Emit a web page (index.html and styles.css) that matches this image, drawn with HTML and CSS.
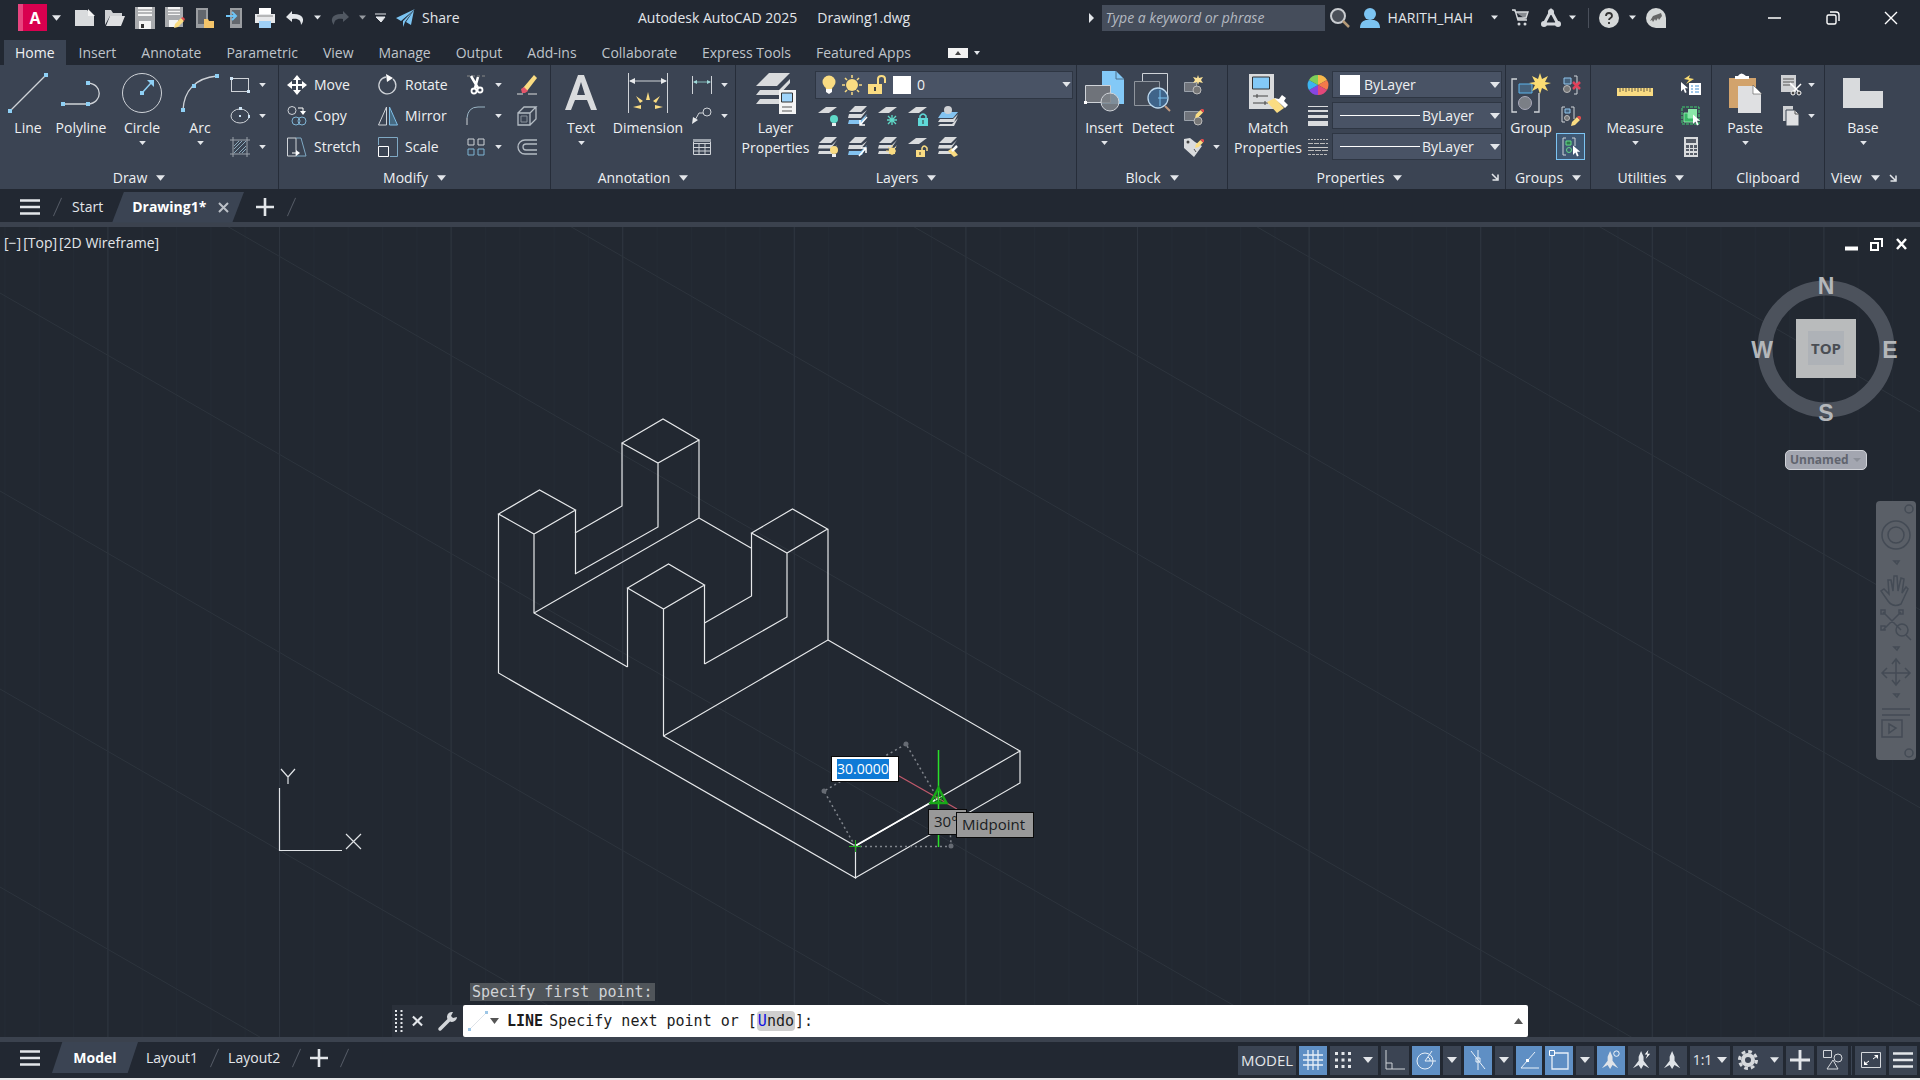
FILE: index.html
```html
<!DOCTYPE html>
<html lang="en">
<head>
<meta charset="utf-8">
<title>Autodesk AutoCAD 2025 - Drawing1.dwg</title>
<link rel="stylesheet" href="styles.css">
</head>
<body>
<svg class="sprite" aria-hidden="true">
  <symbol id="caret" viewBox="0 0 10 6"><path d="M0 0h10L5 6z" fill="#e3e6ea"/></symbol>
  <symbol id="menu" viewBox="0 0 20 16"><path d="M0 1.500h20M0 8h20M0 14.500h20" stroke="#e3e6ea" stroke-width="2.600"/></symbol>
  <symbol id="plus" viewBox="0 0 18 18"><path d="M9 0v18M0 9h18" stroke="#e3e6ea" stroke-width="2.600"/></symbol>
  <symbol id="corner" viewBox="0 0 8 8"><path d="M1 1l5 5M7 1.500V7H1.500" stroke="#e3e6ea" stroke-width="1.500" fill="none"/></symbol>
  <symbol id="sheet1" viewBox="0 0 20 20"><path d="M8 1h11l-8 6H0z" fill="#d9dbdd"/></symbol>
  <symbol id="stack" viewBox="0 0 20 20"><path d="M7 0h12l-6 6H1zM1 8h13l5-5-6 8.500H0zM1 14h12l6-6-5 9H0z" fill="#d9dbdd"/></symbol>
  <symbol id="stackblue" viewBox="0 0 20 20"><path d="M7 0h12l-6 6H1zM1 8h13l5-4-6 8H0z" fill="#d9dbdd"/><path d="M1 14h12l6-6-5 10H0z" fill="#83c3f0"/></symbol>
  <symbol id="pencil" viewBox="0 0 10 10"><path d="M0 10l1-4 5-5 3 3-5 5z" fill="#fadc82"/><path d="M6 1l1-1h2l1 1v2L9 4z" fill="#e04b4b"/></symbol>
  <symbol id="cursor" viewBox="0 0 10 14"><path d="M0 0v12l3-3 2 5 2-1-2-5h4z" fill="#fff"/></symbol>
  <symbol id="man" viewBox="0 0 20 22"><path d="M10 0l3 7v5l7 9-7-4-3 5-3-5-7 4 7-9V7z" fill="#dfe3e8"/></symbol>
</svg>

<div class="app">
<header class="titlebar">
  <div class="quick">
    <button class="logo" aria-label="Application menu">A</button>
    <button class="qcaret" aria-label="More"><svg width="9" height="6"><use href="#caret"/></svg></button>
    <button aria-label="New"><svg width="20" height="20" viewBox="0 0 20 20"><path d="M0 2h12l7 6v10H0z" fill="#d9dbdd"/><path d="M13 1v7h7z" fill="#f4f4f4"/></svg></button>
    <button aria-label="Open"><svg width="20" height="20" viewBox="0 0 20 20"><path d="M0 17V2h6l2 3h9v3H5z" fill="#cfd1d4"/><path d="M5 8h15l-4 10H1z" fill="#dfe0e2"/></svg></button>
    <button aria-label="Save"><svg width="20" height="22" viewBox="0 0 20 22"><path d="M0 0h20v22H0z" fill="#a9abae"/><path d="M3 0h14v9H3zM4 14h12v8H4z" fill="#f4f4f4"/><path d="M3 3h14M3 6h14" stroke="#77797c"/><path d="M6 17h3v4H6z" fill="#333"/></svg></button>
    <button aria-label="Save as"><svg width="20" height="22" viewBox="0 0 20 22"><path d="M0 0h18v20H0z" fill="#a9abae"/><path d="M3 0h12v8H3zM4 13h9v7H4z" fill="#f4f4f4"/><path d="M3 3h12M3 6h12" stroke="#77797c"/><g transform="translate(9 10)"><path d="M0 11l1-4 6-6 3 3-6 6z" fill="#fadc82"/><path d="M7 1l2-1 2 2-1 2z" fill="#e04b4b"/></g></svg></button>
    <button aria-label="Open from mobile"><svg width="20" height="20" viewBox="0 0 20 20"><path d="M1 0h12v20H1z" fill="#9a9da1"/><path d="M3 2h8v14H3z" fill="#63676d"/><path d="M9 11h4l1 2h5v7H9z" fill="#f5c56a"/></svg></button>
    <button aria-label="Save to mobile"><svg width="20" height="20" viewBox="0 0 20 20"><path d="M5 0h12v20H5z" fill="#9a9da1"/><path d="M7 2h8v14H7z" fill="#63676d"/><path d="M1 8h9M7 4l4 4-4 4" stroke="#6fc4f5" stroke-width="2" fill="none"/></svg></button>
    <button aria-label="Plot"><svg width="20" height="20" viewBox="0 0 20 20"><path d="M4 0h12v6H4z" fill="#fff"/><path d="M0 6h20v9H0z" fill="#e6e7e9"/><path d="M2 8h16" stroke="#888"/><path d="M4 13h12v7H4z" fill="#9fd0f7"/></svg></button>
    <button aria-label="Undo"><svg width="20" height="16" viewBox="0 0 20 16"><path d="M7 1L1 7l6 5V9c6-1 9 1 9 6 5-6 1-12-9-11z" fill="#e3e6ea"/></svg></button>
    <button class="qc2" aria-label="Undo list"><svg width="7" height="5"><use href="#caret"/></svg></button>
    <button aria-label="Redo"><svg width="20" height="16" viewBox="0 0 20 16"><path d="M13 1l6 6-6 5V9C7 8 4 10 4 15-1 9 3 3 13 4z" fill="#515862"/></svg></button>
    <button class="qc2 dim" aria-label="Redo list"><svg width="7" height="5"><use href="#caret"/></svg></button>
    <button aria-label="Customize"><svg width="11" height="10" viewBox="0 0 11 10"><path d="M0 1h11M1 4h9l-4 5z" fill="#e3e6ea" stroke="#e3e6ea"/></svg></button>
    <button class="share"><svg width="19" height="18" viewBox="0 0 19 18"><path d="M19 0L0 9l5 3zM18 1l-3 15-5-3zM7 12l10-10-8 11-2 5z" fill="#7cc4f2"/></svg>Share</button>
  </div>
  <h1 class="title"><span>Autodesk AutoCAD 2025</span><span>Drawing1.dwg</span></h1>
  <div class="account">
    <svg width="5" height="10" viewBox="0 0 5 10"><path d="M0 0l5 5-5 5z" fill="#e3e6ea"/></svg>
    <input class="search" type="text" placeholder="Type a keyword or phrase" aria-label="Search">
    <button aria-label="Search"><svg width="20" height="20" viewBox="0 0 20 20"><circle cx="8" cy="8" r="7" fill="#4a4f58" stroke="#c9ccd0" stroke-width="2"/><path d="M13 13l6 6" stroke="#b59a78" stroke-width="2.500"/></svg></button>
    <button class="user"><svg width="20" height="20" viewBox="0 0 20 20"><circle cx="10" cy="6" r="6" fill="#7cc4f2"/><path d="M0 20c0-6 4-8 7-8h6c3 0 7 2 7 8z" fill="#7cc4f2"/></svg>HARITH_HAH</button>
    <button class="gap wide" aria-label="Account menu"><svg width="7" height="5"><use href="#caret"/></svg></button>
    <button class="gap" aria-label="App store"><svg width="17" height="17" viewBox="0 0 17 17"><path d="M0 1h3l3 10h9M4 3h12l-2 6H5" fill="#888c92" stroke="#d5d8dc" stroke-width="1.400"/><circle cx="7" cy="15" r="1.500" fill="#d5d8dc"/><circle cx="13" cy="15" r="1.500" fill="#d5d8dc"/></svg></button>
    <button class="gaps" aria-label="Autodesk app"><svg width="20" height="18" viewBox="0 0 20 18"><path d="M10 2L3 15h14z" fill="none" stroke="#d5d8dc" stroke-width="3"/><circle cx="10" cy="3" r="3" fill="#d5d8dc"/><circle cx="3" cy="15" r="3" fill="#d5d8dc"/><circle cx="17" cy="15" r="3" fill="#d5d8dc"/></svg></button>
    <button aria-label="Autodesk app menu"><svg width="7" height="5"><use href="#caret"/></svg></button>
    <i class="vline"></i>
    <button aria-label="Help"><svg width="20" height="20" viewBox="0 0 20 20"><circle cx="10" cy="10" r="10" fill="#d5d8d8"/><path d="M7 8c0-4 6-4 6 0 0 2-3 2-3 4M10 14v2" fill="none" stroke="#333" stroke-width="1.800"/></svg></button>
    <button aria-label="Help menu"><svg width="7" height="5"><use href="#caret"/></svg></button>
    <button aria-label="Assistant"><svg width="20" height="20" viewBox="0 0 20 20"><path d="M10 0a10 10 0 0 1 10 10v10H10A10 10 0 0 1 10 0z" fill="#d5d8d8"/><path d="M4 13l3-5 8-3 1 3-3 4-1-2-2 3-1-2-2 3-1-2z" fill="#666"/></svg></button>
  </div>
  <div class="window">
    <button aria-label="Minimize"><svg width="14" height="14" viewBox="0 0 14 14"><path d="M0 7h13" stroke="#fff" stroke-width="1.500"/></svg></button>
    <button aria-label="Restore"><svg width="14" height="14" viewBox="0 0 14 14"><rect x="1" y="4" width="9" height="9" rx="1.500" fill="none" stroke="#fff" stroke-width="1.400"/><path d="M4 1h6q3 0 3 3v6" fill="none" stroke="#fff" stroke-width="1.400"/></svg></button>
    <button aria-label="Close"><svg width="14" height="14" viewBox="0 0 14 14"><path d="M1 1l12 12M13 1L1 13" stroke="#fff" stroke-width="1.400"/></svg></button>
  </div>
</header>

<nav class="tabs">
  <a class="on" href="#home">Home</a><a href="#insert">Insert</a><a href="#annotate">Annotate</a><a href="#parametric">Parametric</a><a href="#view">View</a><a href="#manage">Manage</a><a href="#output">Output</a><a href="#addins">Add-ins</a><a href="#collaborate">Collaborate</a><a href="#express">Express Tools</a><a href="#featured">Featured Apps</a>
  <button aria-label="Minimize ribbon"><svg width="32" height="10" viewBox="0 0 32 10"><path d="M0 0h20v10H0z" fill="#f2f2f2"/><path d="M7 7h6l-3-4z" fill="#444"/><path d="M26 3h6l-3 4z" fill="#e3e6ea"/></svg></button>
</nav>

<main class="ribbon">
  <section class="panel">
    <div class="body draw">
      <button class="big"><svg width="40" height="40" viewBox="0 0 40 40"><path d="M2 38L38 2" stroke="#cfd3d8" stroke-width="1.300"/><path d="M0 36h4v4H0zM36 0h4v4h-4z" fill="#8fd0f5"/></svg>Line</button>
      <button class="big"><svg width="40" height="40" viewBox="0 0 40 40"><path d="M2 31h25c15-1 15-20 0-21" stroke="#cfd3d8" stroke-width="1.300" fill="none"/><path d="M0 29h4v4H0zM25 29h4v4h-4zM25 8h4v4h-4z" fill="#8fd0f5"/></svg>Polyline</button>
      <button class="big"><svg width="40" height="40" viewBox="0 0 40 40"><circle cx="20" cy="20" r="19.500" stroke="#cfd3d8" fill="none"/><path d="M20 20L29 10" stroke="#8fd0f5" stroke-width="1.500"/><path d="M18 18h4v4h-4zM25 7h7v7z" fill="#8fd0f5"/></svg>Circle<svg class="c" width="7" height="4"><use href="#caret"/></svg></button>
      <button class="big"><svg width="40" height="40" viewBox="0 0 40 40"><path d="M3 37C4 18 15 5 37 3" stroke="#cfd3d8" fill="none" stroke-width="1.300"/><path d="M1 35h4v4H1zM12 11h4v4h-4zM35 1h4v4h-4z" fill="#8fd0f5"/></svg>Arc<svg class="c" width="7" height="4"><use href="#caret"/></svg></button>
      <div class="stack">
        <button class="tool" aria-label="Rectangle"><svg width="20" height="20" viewBox="0 0 20 20"><rect x="1.500" y="3.500" width="17" height="13" fill="none" stroke="#cfd3d8"/><path d="M0 2h3v3H0zM17 15h3v3h-3z" fill="#cfe4f5"/></svg><svg width="7" height="4"><use href="#caret"/></svg></button>
        <button class="tool" aria-label="Ellipse"><svg width="20" height="20" viewBox="0 0 20 20"><ellipse cx="10" cy="10" rx="9" ry="7" fill="none" stroke="#cfd3d8"/><path d="M9 9h2v2H9zM9 1h3v3H9zM18 9h2v3h-2z" fill="#cfe4f5"/></svg><svg width="7" height="4"><use href="#caret"/></svg></button>
        <button class="tool" aria-label="Hatch"><svg width="20" height="20" viewBox="0 0 20 20"><path d="M3 0v20M17 0v20M0 3h20M0 17h20" stroke="#9ba2ab" fill="none"/><path d="M4 9l5-5M4 16L16 4M9 16l7-7M4 12l8-8M12 16l4-4" stroke="#8ba9ba"/></svg><svg width="7" height="4"><use href="#caret"/></svg></button>
      </div>
    </div>
    <h2>Draw<svg width="9" height="6"><use href="#caret"/></svg></h2>
  </section>

  <section class="panel">
    <div class="body modify">
      <div class="stack">
        <button class="tool"><svg width="20" height="20" viewBox="0 0 20 20"><path d="M10 3v14M3 10h14" stroke="#fff" stroke-width="2"/><path d="M10 0l4 5H6zM10 20l4-5H6zM0 10l5-4v8zM20 10l-5-4v8z" fill="#fff"/></svg>Move</button>
        <button class="tool"><svg width="20" height="20" viewBox="0 0 20 20" fill="none"><circle cx="5" cy="4.500" r="4" stroke="#cfd3d8"/><path d="M11 2h5v4" stroke="#fff"/><path d="M13 5h6l-3 4z" fill="#fff"/><circle cx="9" cy="15" r="4" stroke="#7fb4d4"/><circle cx="15" cy="15" r="4" stroke="#7fb4d4"/></svg>Copy</button>
        <button class="tool"><svg width="20" height="20" viewBox="0 0 20 20" fill="none"><path d="M9 1H.5v18H9z" stroke="#cfd3d8"/><path d="M9 1h5l5 18H9" stroke="#7fa9c4"/><path d="M5 16h5" stroke="#fff"/><path d="M9 13l4 3-4 3z" fill="#fff"/></svg>Stretch</button>
      </div>
      <div class="stack">
        <button class="tool"><svg width="20" height="20" viewBox="0 0 20 20" fill="none"><path d="M15 4a8.500 8.500 0 1 1-7-2" stroke="#cfd3d8" stroke-width="1.300"/><path d="M8-1l7 4-6 4z" fill="#fff"/></svg>Rotate</button>
        <button class="tool"><svg width="20" height="20" viewBox="0 0 20 20" fill="none"><path d="M8.500 1v18H.5z" stroke="#cfd3d8"/><path d="M11.500 1v18h8z" stroke="#7fbfe8" fill="#466a82"/></svg>Mirror</button>
        <button class="tool"><svg width="20" height="20" viewBox="0 0 20 20" fill="none"><path d="M.5 8V.5h19v19H12" stroke="#7fa9c4"/><path d="M.5 9.500h10v10H.5z" stroke="#fff"/></svg>Scale</button>
      </div>
      <div class="stack">
        <button class="tool" aria-label="Trim"><svg width="20" height="20" viewBox="0 0 20 20" fill="none"><path d="M1 1h18" stroke="#888" stroke-dasharray="3 2"/><path d="M5 1l7 12M12 2L9 13" stroke="#fff" stroke-width="2.500"/><circle cx="8" cy="16" r="2.500" stroke="#fff" stroke-width="1.800"/><circle cx="14" cy="15" r="2.500" stroke="#fff" stroke-width="1.800"/></svg><svg width="7" height="4"><use href="#caret"/></svg></button>
        <button class="tool" aria-label="Fillet"><svg width="20" height="20" viewBox="0 0 20 20" fill="none"><path d="M1 19V12" stroke="#cfd3d8"/><path d="M1 12Q2 1 12 1h7" stroke="#9ab4c4"/></svg><svg width="7" height="4"><use href="#caret"/></svg></button>
        <button class="tool" aria-label="Array"><svg width="20" height="20" viewBox="0 0 20 20" fill="none"><path d="M2 2h6v6H2zM12 2h6v6h-6z" stroke="#cfd3d8"/><path d="M2 12h6v6H2zM12 12h6v6h-6z" stroke="#7fb4d4"/></svg><svg width="7" height="4"><use href="#caret"/></svg></button>
      </div>
      <div class="stack">
        <button class="tool" aria-label="Erase"><svg width="20" height="20" viewBox="0 0 20 20" fill="none"><path d="M0 19h6M11 19h9" stroke="#ddd"/><path d="M6 13L17 0l3 3-10 13z" fill="#fadc82"/><path d="M4 14l3-2 4 4-3 2H5z" fill="#e4566a"/></svg></button>
        <button class="tool" aria-label="Explode"><svg width="20" height="20" viewBox="0 0 20 20" fill="none"><path d="M1 7h12v12H1zM1 7l6-6h12l-6 6M19 1v12l-6 6" stroke="#b4bcc4" stroke-width="1.300"/><path d="M4 10h6v6H4z" stroke="#8a929c"/></svg></button>
        <button class="tool" aria-label="Offset"><svg width="20" height="20" viewBox="0 0 20 20" fill="none"><path d="M20 3H8a7 7 0 0 0 0 14h12M20 7H9a3 3 0 0 0 0 6h11" stroke="#b4bcc4" stroke-width="1.300"/></svg></button>
      </div>
    </div>
    <h2>Modify<svg width="9" height="6"><use href="#caret"/></svg></h2>
  </section>

  <section class="panel">
    <div class="body annot">
      <button class="big"><svg width="32" height="40" viewBox="0 0 32 40"><path d="M0 37L13 2h6l13 35h-6l-4-10H10L6 37zM12 22h8L16 9z" fill="#d9dbdd" fill-rule="evenodd"/></svg>Text<svg class="c" width="7" height="4"><use href="#caret"/></svg></button>
      <button class="big"><svg width="40" height="40" viewBox="0 0 40 40"><path d="M.5 0v40M39.500 0v40M2 8h36" stroke="#cfd3d8"/><path d="M1 8l6-3v6zM39 8l-6-3v6z" fill="#e8eaec"/><path d="M20 19l2 8h-4zM8 23l7 5-3 2zM32 23l-4 7-3-2zM5 34l8-2v4zM35 34l-8-2v4z" fill="#fadc82"/></svg>Dimension</button>
      <div class="stack">
        <button class="tool" aria-label="Linear"><svg width="20" height="20" viewBox="0 0 20 20"><path d="M.5 1v18M19.500 1v18" stroke="#cfd3d8"/><path d="M2 7h16" stroke="#83b9b9"/><path d="M1 7l4-2v4zM19 7l-4-2v4z" fill="#9fd8d8"/></svg><svg width="7" height="4"><use href="#caret"/></svg></button>
        <button class="tool" aria-label="Leader"><svg width="20" height="20" viewBox="0 0 20 20"><circle cx="15" cy="6" r="4" fill="none" stroke="#cfd3d8"/><path d="M11 7H7l-5 9" stroke="#cfd3d8" fill="none"/><path d="M0 18l1-7 5 3z" fill="#e8eaec"/></svg><svg width="7" height="4"><use href="#caret"/></svg></button>
        <button class="tool" aria-label="Table"><svg width="20" height="20" viewBox="0 0 20 20"><path d="M1.500 2.500h17v15h-17zM1 6.500h18M1 10.500h18M1 14h18M7 6v12M13 6v12" stroke="#cfd3d8" fill="none"/><path d="M1 2h18v3H1z" fill="#9ba2ab"/></svg></button>
      </div>
    </div>
    <h2>Annotation<svg width="9" height="6"><use href="#caret"/></svg></h2>
  </section>

  <section class="panel">
    <div class="body layers">
      <button class="big"><svg width="40" height="40" viewBox="0 0 40 40"><path d="M13 0h21L21 13H0z" fill="#d9dbdd"/><path d="M4 17h19L34 6v4L23 22H0zM4 26h19l8-9v5l-8 9H0z" fill="#d9dbdd"/><path d="M23 17h17v24H23z" fill="#f4f4f4"/><path d="M25.500 20h11v9h-11z" fill="#9fd4fa" stroke="#333" stroke-width="1"/><path d="M26 34h10M26 38h10" stroke="#555"/></svg>Layer<br>Properties</button>
      <div class="layercol">
        <button class="combo">
          <svg width="14" height="19" viewBox="0 0 14 19"><circle cx="7" cy="7" r="6.500" fill="#fadc82"/><path d="M3 11h8l-1 3H4z" fill="#fadc82"/><path d="M4 14h6v3l-3 2-3-2z" fill="#fff"/></svg>
          <svg width="20" height="20" viewBox="0 0 20 20"><circle cx="10" cy="10" r="6" fill="#fadc82"/><path d="M10 0v3M10 17v3M0 10h3M17 10h3M3 3l2 2M15 15l2 2M3 17l2-2M15 5l2-2" stroke="#fadc82" stroke-width="1.500"/></svg>
          <svg width="19" height="20" viewBox="0 0 19 20"><path d="M0 9h14v10H0z" fill="#fadc82"/><path d="M10 9V4q0-3 3.500-3T17 4v4" fill="none" stroke="#fadc82" stroke-width="2"/><path d="M7 12v4" stroke="#444" stroke-width="2"/></svg>
          <i class="swatch"></i><span>0</span><svg class="end" width="9" height="5"><use href="#caret"/></svg>
        </button>
        <div class="row">
          <button aria-label="Layer off"><svg width="20" height="20" viewBox="0 0 20 20"><use href="#sheet1"/><circle cx="16" cy="13" r="4" fill="#5fd9c8"/><path d="M14 17h4v3h-4z" fill="#eee"/></svg></button>
          <button aria-label="Isolate"><svg width="20" height="20" viewBox="0 0 20 20"><use href="#stackblue"/><path d="M19 11l-7 8M12 14v5h5" stroke="#fff" fill="none" stroke-width="1.500"/></svg></button>
          <button aria-label="Freeze"><svg width="20" height="20" viewBox="0 0 20 20"><use href="#sheet1"/><path d="M14 9v10M9 14h10M10 10l8 8M18 10l-8 8" stroke="#5fd9c8" stroke-width="1.300"/></svg></button>
          <button aria-label="Lock"><svg width="20" height="20" viewBox="0 0 20 20"><use href="#sheet1"/><path d="M10 12h10v8H10z" fill="#5fd9d8"/><path d="M12 12v-2q3-4 6 0v2" stroke="#5fd9d8" fill="none" stroke-width="1.500"/><path d="M15 14v4" stroke="#333"/></svg></button>
          <button aria-label="Make current"><svg width="20" height="20" viewBox="0 0 20 20"><path d="M4 6h16l-5 6H0z" fill="#83c3f0"/><path d="M2 13h13l5-5-4 8H0zM2 18h12l6-6-4 8H0z" fill="#d9dbdd"/><circle cx="10" cy="4" r="4" fill="#cfd1d4"/></svg></button>
        </div>
        <div class="row">
          <button aria-label="Turn all on"><svg width="20" height="20" viewBox="0 0 20 20"><use href="#stack"/><circle cx="16" cy="13" r="4" fill="#fadc82"/><path d="M14 17h4v3h-4z" fill="#eee"/></svg></button>
          <button aria-label="Unisolate"><svg width="20" height="20" viewBox="0 0 20 20"><use href="#stackblue"/><path d="M11 19l7-8M13 11h5v5" stroke="#fff" fill="none" stroke-width="1.500"/></svg></button>
          <button aria-label="Thaw all"><svg width="20" height="20" viewBox="0 0 20 20"><use href="#stack"/><circle cx="14" cy="14" r="3.500" fill="#fadc82"/><path d="M14 8v12M8 14h12M10 10l8 8M18 10l-8 8" stroke="#fadc82" stroke-dasharray="2 2"/></svg></button>
          <button aria-label="Unlock"><svg width="20" height="20" viewBox="0 0 20 20"><use href="#sheet1"/><path d="M8 13h9v7H8z" fill="#fadc82"/><path d="M14 13v-2q2-4 5 0v3" stroke="#fadc82" fill="none" stroke-width="1.500"/><path d="M12 15v3" stroke="#333"/></svg></button>
          <button aria-label="Match layer"><svg width="20" height="20" viewBox="0 0 20 20"><use href="#stack"/><path d="M10 14l4-3 6 7-4 2z" fill="#fadc82"/><path d="M14 14l5-5" stroke="#fff" stroke-width="2.500"/></svg></button>
        </div>
      </div>
    </div>
    <h2>Layers<svg width="9" height="6"><use href="#caret"/></svg></h2>
  </section>

  <section class="panel">
    <div class="body block">
      <button class="big"><svg width="40" height="40" viewBox="0 0 40 40"><path d="M18-2h14l8 8v25H18z" fill="#83c9f7"/><path d="M32-2v8h8" fill="none" stroke="#4d6f8a"/><path d="M1.500 12.500h25v17h-25z" fill="#6f737a" stroke="#cfd3d8"/><circle cx="26" cy="29" r="9" fill="#7e8288" fill-opacity=".85" stroke="#cfd3d8"/><path d="M0 28h3v3H0z" fill="#fff"/></svg>Insert<svg class="c" width="7" height="4"><use href="#caret"/></svg></button>
      <button class="big"><svg width="38" height="40" viewBox="0 0 38 40" fill="none"><path d="M8.500 8V.5h25V25" stroke="#cfd3d8"/><path d="M.5 8.500h25v24H.5z" stroke="#8f959d" fill="#434a56"/><circle cx="24" cy="25" r="10" fill="#3f648a" stroke="#bcd8ee" stroke-width="1.300"/><path d="M24 25h9M26 17v16" stroke="#7cc4f2"/><path d="M31 33l5 5" stroke="#c09a80" stroke-width="2"/></svg>Detect</button>
      <div class="stack">
        <button class="tool" aria-label="Create block"><svg width="20" height="20" viewBox="0 0 20 20"><path d="M.5 7.500h12v9H.5z" fill="#6f737a" stroke="#9ba2ab"/><circle cx="13" cy="15" r="4" fill="#777" stroke="#bbb"/><path d="M14 0l1 3 4-1-2 3 2 3-4-1-1 3-1-3-4 1 2-3-2-3 4 1z" fill="#fbe298"/></svg></button>
        <button class="tool" aria-label="Edit block"><svg width="20" height="20" viewBox="0 0 20 20"><path d="M.5 5.500h14v9H.5z" fill="#6f737a" stroke="#9ba2ab"/><circle cx="14" cy="15" r="4" fill="#777" stroke="#bbb"/><use href="#pencil" x="11" y="1" width="9" height="13"/></svg></button>
        <button class="tool" aria-label="Edit attributes"><svg width="20" height="20" viewBox="0 0 20 20"><path d="M0 2l6-1 5 4 7 4-8 11L0 11z" fill="#d9dbdd"/><circle cx="4" cy="5" r="1.500" fill="#444"/><path d="M10 12l2 3" stroke="#555"/><use href="#pencil" x="11" y="0" width="9" height="13"/></svg><svg width="7" height="4"><use href="#caret"/></svg></button>
      </div>
    </div>
    <h2>Block<svg width="9" height="6"><use href="#caret"/></svg></h2>
  </section>

  <section class="panel">
    <div class="body props">
      <button class="big"><svg width="40" height="40" viewBox="0 0 40 40"><path d="M1 1h25v35H1z" fill="#d9dbdd"/><path d="M4.500 4h17v12h-17z" fill="#83c9f7" stroke="#333"/><path d="M5 23h15M5 30h15M9 21v4M17 28v4" stroke="#444"/><path d="M19 29l8-4 9 10-7 5z" fill="#fadc82"/><path d="M26 25l5 1 3-4 4 3-2 3 4 4-3 3z" fill="#fff"/></svg>Match<br>Properties</button>
      <div class="propcol">
        <svg width="20" height="20" viewBox="0 0 20 20"><path d="M10 10V0a10 10 0 0 1 9 5z" fill="#f7b84b"/><path d="M10 10l9-5a10 10 0 0 1 0 10z" fill="#f47a4a"/><path d="M10 10l9 5a10 10 0 0 1-9 5z" fill="#e3487a"/><path d="M10 10v10a10 10 0 0 1-9-5z" fill="#8746e0"/><path d="M10 10l-9 5A10 10 0 0 1 1 5z" fill="#3cb4f0"/><path d="M10 10L1 5a10 10 0 0 1 9-5z" fill="#7dcf5a"/></svg>
        <button class="combo"><i class="swatch wide"></i><span>ByLayer</span><svg class="end" width="10" height="6"><use href="#caret"/></svg></button>
        <svg width="20" height="20" viewBox="0 0 20 20"><path d="M0 .5h20" stroke="#d9dbdd"/><path d="M0 5h20" stroke="#d9dbdd" stroke-width="2"/><path d="M0 10.500h20" stroke="#d9dbdd" stroke-width="3"/><path d="M0 17.500h20" stroke="#d9dbdd" stroke-width="5"/></svg>
        <button class="combo"><i class="rule"></i><span>ByLayer</span><svg class="end" width="10" height="6"><use href="#caret"/></svg></button>
        <svg width="20" height="20" viewBox="0 0 20 20"><path d="M0 2.500h20" stroke="#bbb" stroke-dasharray="2 1"/><path d="M0 6.500h20" stroke="#bbb" stroke-dasharray="5 1"/><path d="M0 10.500h20" stroke="#ccc"/><path d="M0 13.500h20" stroke="#bbb" stroke-dasharray="6 1"/><path d="M0 17.500h20" stroke="#bbb" stroke-dasharray="3 1"/></svg>
        <button class="combo"><i class="rule"></i><span>ByLayer</span><svg class="end" width="10" height="6"><use href="#caret"/></svg></button>
      </div>
    </div>
    <h2 class="shift">Properties<svg width="9" height="6"><use href="#caret"/></svg></h2>
    <button class="launch" aria-label="Properties palette"><svg width="8" height="8"><use href="#corner"/></svg></button>
  </section>

  <section class="panel">
    <div class="body groups">
      <button class="big"><svg width="40" height="40" viewBox="0 0 40 40"><path d="M6 6H1v33h5M23 39h5V20" fill="none" stroke="#cfd3d8" stroke-width="1.300"/><path d="M8 11h13v9H8z" fill="#46627c" stroke="#5cb4ec"/><circle cx="14" cy="30" r="6.500" fill="#7b7f86" stroke="#aab"/><path d="M29 0l2 6 6-3-3 6 6 1-6 2 3 6-6-3-2 6-2-6-6 3 3-6-6-2 6-1-3-6 6 3z" fill="#fadc72"/></svg>Group</button>
      <div class="stack">
        <button class="tool" aria-label="Ungroup"><svg width="20" height="20" viewBox="0 0 20 20"><path d="M3 3h7v6H3z" fill="#46627c" stroke="#8fc4ec"/><circle cx="6" cy="14" r="3.500" fill="#777" stroke="#bbb"/><path d="M13 1h3v18h-3" fill="none" stroke="#cfd3d8"/><path d="M12 7l7 7M19 7l-7 7" stroke="#e0405a" stroke-width="2.500"/></svg></button>
        <button class="tool" aria-label="Group edit"><svg width="20" height="20" viewBox="0 0 20 20"><path d="M4 1H1v15h3M10 1h3v12" fill="none" stroke="#cfd3d8"/><path d="M4 3h5v4H4z" fill="#46627c" stroke="#8fc4ec"/><circle cx="6" cy="12" r="2.500" fill="#777" stroke="#bbb"/><use href="#pencil" x="10" y="10" width="10" height="10"/></svg></button>
        <button class="tool lit" aria-label="Group selection"><svg width="20" height="20" viewBox="0 0 20 20"><path d="M5 1H2v17h3M11 1h3v8" fill="none" stroke="#cfd3d8"/><path d="M5 4h5v4H5z" fill="#2e7a48" stroke="#62d88a"/><circle cx="8" cy="13" r="2.500" fill="none" stroke="#62d88a"/><use href="#cursor" x="12" y="8" width="8" height="12"/></svg></button>
      </div>
    </div>
    <h2>Groups<svg width="9" height="6"><use href="#caret"/></svg></h2>
  </section>

  <section class="panel">
    <div class="body utils">
      <button class="big"><svg width="36" height="40" viewBox="0 0 36 40"><path d="M0 15h36v8H0z" fill="#fadc82"/><path d="M3 15v4M6 15v3M9 15v4M12 15v3M15 15v4M18 15v3M21 15v4M24 15v3M27 15v4M30 15v3M33 15v4" stroke="#6b6045"/></svg>Measure<svg class="c" width="7" height="4"><use href="#caret"/></svg></button>
      <div class="stack">
        <button class="tool" aria-label="Quick select"><svg width="20" height="20" viewBox="0 0 20 20"><path d="M8 8h12v12H8z" fill="#fff"/><path d="M10 11h2M14 11h4M10 14h2M14 14h4M10 17h2M14 17h4" stroke="#3f8fd0"/><path d="M9 0l-6 4 5 1-3 4 8-5-5-1z" fill="#fadc72"/><use href="#cursor" x="0" y="6" width="8" height="13"/></svg></button>
        <button class="tool" aria-label="Select all"><svg width="20" height="20" viewBox="0 0 20 20"><path d="M1 1h17v17H1z" fill="none" stroke="#40d070" stroke-dasharray="3 1"/><path d="M7 3h9v9H7z" fill="#8ae8a8"/><path d="M3 7h4v5h7v4H3z" fill="#39b565" stroke="#8ae8a8"/><use href="#cursor" x="12" y="8" width="8" height="12"/></svg></button>
        <button class="tool" aria-label="Calculator"><svg width="20" height="20" viewBox="0 0 20 20"><path d="M3 0h14v20H3z" fill="#d9dbdd"/><path d="M5 2h10v4H5z" fill="#555b66"/><path d="M5 8h3v3H5zM9 8h3v3H9zM13 8h3v3h-3zM5 12h3v2H5zM9 12h3v2H9zM13 12h3v2h-3zM5 16h3v2H5zM9 16h3v2H9zM13 16h3v2h-3z" fill="#555b66"/></svg></button>
      </div>
    </div>
    <h2>Utilities<svg width="9" height="6"><use href="#caret"/></svg></h2>
  </section>

  <section class="panel">
    <div class="body clip">
      <button class="big"><svg width="34" height="40" viewBox="0 0 34 40"><path d="M1 5h27v30H1z" fill="#d2a36c"/><path d="M7 6V3h3q3-5 8 0h3v3z" fill="#fff"/><path d="M10 13h16l7 7v20H10z" fill="#dfe0e2"/><path d="M25 12v9h9z" fill="#fff" stroke="#555" stroke-width=".6"/></svg>Paste<svg class="c" width="7" height="4"><use href="#caret"/></svg></button>
      <div class="stack">
        <button class="tool" aria-label="Cut"><svg width="20" height="20" viewBox="0 0 20 20"><path d="M0 0h15v17H0z" fill="#cfd1d4"/><path d="M2 4h11M2 7h11M2 10h7" stroke="#555"/><path d="M9 8l9 9M20 9l-8 8" stroke="#fff" stroke-width="1.500"/><circle cx="12" cy="18" r="2" fill="#444" stroke="#fff"/><circle cx="18" cy="18" r="2" fill="#444" stroke="#fff"/></svg><svg width="7" height="4"><use href="#caret"/></svg></button>
        <button class="tool" aria-label="Copy clip"><svg width="20" height="20" viewBox="0 0 20 20"><path d="M2 0h10v15H2z" fill="#cfd1d4"/><path d="M5 4h9l4 4v12H5z" fill="#dfe0e2" stroke="#3b4453"/><path d="M14 4v4h4" fill="none" stroke="#555"/></svg><svg width="7" height="4"><use href="#caret"/></svg></button>
      </div>
    </div>
    <h2>Clipboard</h2>
  </section>

  <section class="panel">
    <div class="body viewp">
      <button class="big"><svg width="40" height="40" viewBox="0 0 40 40"><path d="M0 5h17v13h23v17H0z" fill="#d9dbdd"/></svg>Base<svg class="c" width="7" height="4"><use href="#caret"/></svg></button>
    </div>
    <h2 class="viewtitle">View<svg width="9" height="6"><use href="#caret"/></svg><svg width="8" height="8"><use href="#corner"/></svg></h2>
  </section>
</main>

<nav class="files">
  <button aria-label="File tab menu"><svg width="20" height="16"><use href="#menu"/></svg></button>
  <i class="slash"></i>
  <a href="#start">Start</a>
  <a class="cur" href="#drawing1"><b>Drawing1*</b><svg width="11" height="11" viewBox="0 0 11 11"><path d="M1 1l9 9M10 1l-9 9" stroke="#bcc1c8" stroke-width="2"/></svg></a>
  <button class="add" aria-label="New drawing"><svg width="18" height="18"><use href="#plus"/></svg></button>
  <i class="slash"></i>
</nav>

<div class="viewport">
  <svg class="canvas" aria-label="Model space drawing">
    <defs>
      <pattern id="major" x="279" y="0" width="171.600" height="100" patternUnits="userSpaceOnUse"><path d="M.5 0v100" stroke="#2e353f"/></pattern>
      <pattern id="minor" x="279" y="0" width="34.320" height="100" patternUnits="userSpaceOnUse"><path d="M.5 0v100" stroke="#242b34"/></pattern>
    </defs>
    <rect width="100%" height="100%" fill="url(#minor)"/>
    <rect width="100%" height="100%" fill="url(#major)"/>
    <g transform="translate(0 -227)" fill="none">
      <path stroke="#2d343d" d="M0-301l2400 1386M0-103l2400 1386M0 95l2400 1386M0 293l2400 1386M0 491l2400 1386M0 689l2400 1386M0 887l2400 1386M0-499l2400 1386M0-697l2400 1386"/>
      <g stroke="#e6e8ea" stroke-width="1.200">
        <path d="M622 443l41-24 36 21-41 23zM622 443v63l-47 27M658 463v64l-83 47M699 440v78L534 613M699 518l52 30"/>
        <path d="M498.500 514l41-24 36 20-41.500 24zM498.500 514v159L855.500 878v-32M534 534v79l93.500 54M575.500 510v64"/>
        <path d="M751.500 533l41-24 35 20-40.500 24zM751.500 533v63l-47 27M787 553v64l-82.500 47M828 529v111L663.500 736"/>
        <path d="M627.500 588l41-24 36 21-41 24zM627.500 588v79M704.500 585v79M663.500 609v127l192 110L1020 751l-192-111M1020 751v32l-165 95"/>
      </g>
      <path d="M855 846l82-47" stroke="#fff" stroke-width="1.600"/>
      <g stroke="#80858c" stroke-width="1.500" stroke-dasharray="2 3"><path d="M855 846l-31-55 82-47 32 55M855 846.500h96q0-18-6-32"/></g>
      <g fill="#666b73"><circle cx="824" cy="791" r="2.500"/><circle cx="906" cy="744" r="2.500"/><circle cx="951" cy="846" r="2.500"/></g>
      <path d="M899 776l58 33" stroke="#c0596b" stroke-width="1.300"/>
      <path d="M849 846.500h12M855.500 840v12" stroke="#22b022"/>
      <path d="M938.500 750v97" stroke="#2be02b" stroke-width="1.500"/>
      <path d="M938.500 788l8 15h-16z" stroke="#18a818" stroke-width="2.500"/><circle cx="938.500" cy="799" r="3" stroke="#18a818"/>
      <path d="M279.500 788v62.500H342M281 769l7 8 7-8M288 777v7M346 834l15 15M361 834l-15 15" stroke="#e0e3e6" stroke-width="1.200"/>
    </g>
  </svg>
  <div class="vplabel"><button>[−]</button><button>[Top]</button><button>[2D Wireframe]</button></div>
  <div class="vpwin">
    <button aria-label="Minimize"><svg width="13" height="13" viewBox="0 0 13 13"><path d="M0 10.500h13" stroke="#fff" stroke-width="4"/></svg></button>
    <button aria-label="Restore"><svg width="13" height="13" viewBox="0 0 13 13" fill="none" stroke="#fff" stroke-width="2"><path d="M1 5h7v7H1zM4 1h8v8"/></svg></button>
    <button aria-label="Close"><svg width="13" height="13" viewBox="0 0 13 13"><path d="M2 1l9 10M11 1L2 11" stroke="#fff" stroke-width="2.500"/></svg></button>
  </div>
  <div class="side">
    <svg class="cube" width="156" height="146" viewBox="0 0 156 146">
      <circle cx="78" cy="73" r="61" fill="none" stroke="#4c525c" stroke-width="15"/>
      <path d="M48 43h60v59H48z" fill="#b9bbbc"/><path d="M60 55h36v34H60z" fill="#aeb2b7"/>
      <g text-anchor="middle" class="dirs"><text x="78" y="18">N</text><text x="78" y="145">S</text><text x="14" y="82">W</text><text x="142" y="82">E</text></g>
      <text x="78" y="78" text-anchor="middle" class="top">TOP</text>
    </svg>
    <button class="ucs">Unnamed<svg width="8" height="4" viewBox="0 0 8 4"><path d="M0 0h8L4 4z" fill="#8b8f98"/></svg></button>
    <div class="navbar">
      <svg width="40" height="259" viewBox="0 0 40 259" fill="none" stroke="#444b55" stroke-width="1.500">
        <circle cx="33" cy="8" r="4"/><circle cx="20" cy="34" r="14"/><circle cx="20" cy="34" r="8"/><path d="M18 60h5l-2 3zM18 146h5l-2 3zM18 193h5l-2 3z"/>
        <path d="M12 100L5 90l3-2 5 5-1-14h3l2 11 1-15h3l1 15 3-13 3 1-2 14 4-6 2 2-7 15q-8 4-13-3z"/>
        <path d="M7 111l18 18M25 111L7 129M5 109h4v4H5zM23 109h4v4h-4zM5 125h4v4H5z"/><circle cx="26" cy="129" r="6"/><path d="M30 134l5 5"/>
        <path d="M20 159v24M7 172h27M11 167l-5 5 5 5M29 167l5 5-5 5M16 163l4-5 4 5M16 179l4 5 4-5"/>
        <path d="M6 208h28M6 214h28M6 219h20v17H6zM13 223l7 4-7 5z"/><circle cx="33" cy="252" r="4"/>
      </svg>
    </div>
  </div>
  <label class="dyn dist"><input type="text" value="30.0000" aria-label="Distance"></label>
  <div class="dyn angle">30°</div>
  <div class="dyn tip">Midpoint</div>

  <div class="command">
    <div class="history"><span>Specify first point:</span></div>
    <div class="cmdrow">
      <div class="cmdtools">
        <svg width="8" height="22" viewBox="0 0 8 22"><path d="M1 0v22M6.500 0v22" stroke="#e3e6ea" stroke-width="2" stroke-dasharray="2 2"/></svg>
        <button aria-label="Close"><svg width="11" height="12" viewBox="0 0 12 12"><path d="M1 1l10 10M11 1L1 11" stroke="#e3e6ea" stroke-width="2.300"/></svg></button>
        <button aria-label="Customize"><svg width="20" height="20" viewBox="0 0 20 20"><path d="M2 18L12 8" stroke="#d3d6da" stroke-width="3.500" stroke-linecap="round"/><path d="M15 1a5 5 0 1 0 4 5l-4 1-2-2z" fill="#d3d6da"/></svg></button>
      </div>
      <div class="cmdline">
        <svg width="20" height="20" viewBox="0 0 20 20"><path d="M2 18L18 2" stroke="#dfe3e8"/><path d="M0 17h3v3H0zM17 0h3v3h-3z" fill="#9dc6e6"/></svg>
        <svg width="9" height="6" viewBox="0 0 9 6"><path d="M0 0h9L4.500 6z" fill="#555"/></svg>
        <b>LINE</b><span>Specify next point or [<button><em>U</em>ndo</button>]:</span>
        <svg class="up" width="9" height="6" viewBox="0 0 9 6"><path d="M0 6h9L4.500 0z" fill="#555"/></svg>
      </div>
    </div>
  </div>
</div>

<footer class="status">
  <nav class="layouts">
    <button aria-label="Layout menu"><svg width="20" height="16"><use href="#menu"/></svg></button>
    <a class="cur" href="#model"><b>Model</b></a>
    <a href="#layout1">Layout1</a><i class="slash"></i>
    <a href="#layout2">Layout2</a><i class="slash"></i>
    <button class="add" aria-label="New layout"><svg width="18" height="18"><use href="#plus"/></svg></button><i class="slash"></i>
  </nav>
  <div class="toggles">
    <button class="w58">MODEL</button>
    <button class="w28 blue" aria-label="Grid"><svg width="20" height="20" viewBox="0 0 20 20"><path d="M5 0v20M10 0v20M15 0v20M0 5h20M0 10h20M0 15h20" stroke="#e8f0f8" stroke-width="1.300"/></svg></button>
    <button class="w48 sp" aria-label="Snap"><svg width="16" height="16" viewBox="0 0 16 16"><path d="M1.500 0v16M8 0v16M14.500 0v16" stroke="#e3e6ea" stroke-width="3" stroke-dasharray="3 3.500"/></svg><svg width="10" height="6"><use href="#caret"/></svg></button>
    <button class="w28" aria-label="Ortho"><svg width="20" height="20" viewBox="0 0 20 20"><path d="M1 0v19h19M1 13h6v6" stroke="#cfd3d8" fill="none"/></svg></button>
    <button class="w28 blue" aria-label="Polar tracking"><svg width="20" height="20" viewBox="0 0 20 20"><circle cx="9" cy="11" r="8" stroke="#e8f0f8" fill="none"/><path d="M9 11h11M9 11l7-10M12 7q3 2 2 4" stroke="#e8f0f8" fill="none"/></svg></button>
    <button class="w18" aria-label="Polar settings"><svg width="10" height="6"><use href="#caret"/></svg></button>
    <button class="w28 blue" aria-label="Isometric drafting"><svg width="20" height="20" viewBox="0 0 20 20"><path d="M10 0v20M3 1l14 18" stroke="#e8f0f8"/><path d="M8 8h4v4H8z" stroke="#e8f0f8" fill="none"/></svg></button>
    <button class="w18" aria-label="Isoplane"><svg width="10" height="6"><use href="#caret"/></svg></button>
    <button class="w26 blue" aria-label="Snap tracking"><svg width="20" height="20" viewBox="0 0 20 20"><path d="M16 2L2 18h18" stroke="#e8f0f8" fill="none"/><path d="M7 9h3v3H7z" fill="#fff"/></svg></button>
    <button class="w28 blue" aria-label="Object snap"><svg width="20" height="20" viewBox="0 0 20 20"><path d="M5 3h14v16H3V6" stroke="#e8f0f8" fill="none" stroke-width="1.300"/><path d="M.5.5h5v5h-5z" stroke="#fff" fill="none"/></svg></button>
    <button class="w18" aria-label="Object snap settings"><svg width="10" height="6"><use href="#caret"/></svg></button>
    <button class="w28 blue" aria-label="Annotation visibility"><svg width="20" height="20" viewBox="0 0 20 22"><use href="#man" width="18" height="22"/><circle cx="16" cy="4" r="3" stroke="#fff" fill="none"/></svg></button>
    <button class="w28" aria-label="Auto scale"><svg width="20" height="20" viewBox="0 0 20 22"><use href="#man" width="18" height="22"/><path d="M17 0l-4 5h3l-2 5 5-6h-3z" fill="#fff"/></svg></button>
    <button class="w28" aria-label="Annotation scale"><svg width="20" height="20" viewBox="0 0 20 22"><use href="#man" width="18" height="22"/></svg></button>
    <button class="w40">1:1<svg width="10" height="6"><use href="#caret"/></svg></button>
    <button class="w50 sp" aria-label="Workspace"><svg width="20" height="20" viewBox="0 0 20 20"><circle cx="10" cy="10" r="5" fill="none" stroke="#d5d8dc" stroke-width="4"/><circle cx="10" cy="10" r="8.500" fill="none" stroke="#d5d8dc" stroke-width="3" stroke-dasharray="3.700 2.970"/></svg><svg width="9" height="6"><use href="#caret"/></svg></button>
    <button class="w28" aria-label="Annotation monitor"><svg width="20" height="20"><use href="#plus"/></svg></button>
    <button class="w32" aria-label="Isolate objects"><svg width="20" height="20" viewBox="0 0 20 20"><path d="M.5.500h8v7h-8zM4 19h11l-5-9z" stroke="#d5d8dc" fill="none"/><circle cx="15" cy="8" r="4" stroke="#d5d8dc" fill="none"/></svg></button>
    <i class="bar"></i>
    <button class="w32" aria-label="Clean screen"><svg width="20" height="18" viewBox="0 0 20 18"><path d="M.5 1.500h19v15H.5z" stroke="#d5d8dc" fill="none"/><path d="M13 4h4v4zM3 10v4h4z" fill="#fff"/><path d="M16 5l-4 3M4 13l4-3" stroke="#fff"/></svg></button>
    <button class="w28" aria-label="Customization"><svg width="20" height="18"><use href="#menu"/></svg></button>
  </div>
</footer>
</div>
</body>
</html>
```
FILE: styles.css
```css
* { box-sizing: border-box; }
html, body { margin: 0; height: 100%; }
body { background: #222832; color: #e3e6ea; font: 14px/20px "Open Sans", "Noto Sans", sans-serif; overflow: hidden; }
button { border: 0; background: none; color: inherit; font: inherit; padding: 0; margin: 0; display: flex; align-items: center; justify-content: center; }
a { color: inherit; text-decoration: none; }
h1, h2 { margin: 0; font: inherit; }
svg { display: block; overflow: visible; flex: none; }
i { display: block; font-style: normal; }
.sprite { position: absolute; width: 0; height: 0; }
.app { display: flex; flex-direction: column; height: 100vh; border-bottom: 2px solid #e8e8ea; }

.titlebar { display: flex; align-items: center; height: 36px; padding: 0 22px 1px 18px; flex: none; }
.quick { display: flex; align-items: center; gap: 10px; }
.logo { width: 29px; height: 27px; background: #d9004f; border-left: 5px solid #e8447f; color: #fff; font-weight: 700; font-size: 16px; }
.quick .qcaret { margin: 0 4px 0 -5px; }
.qc2 { margin: 0 -1px; }
.dim { opacity: .6; }
.share { gap: 7px; }
.title { flex: 1; display: flex; justify-content: center; gap: 20px; white-space: nowrap; }
.account { display: flex; align-items: center; gap: 8px; }
.account > button { margin-right: 2px; }
.search { width: 223px; height: 26px; border: 0; padding: 0 4px; background: #454d5b; color: #e3e6ea; font: italic 14px/20px "Open Sans", "Noto Sans", sans-serif; margin-right: -3px; }
.search::placeholder { color: #b4b9c1; opacity: 1; }
.user { gap: 8px; }
.account > .gap { margin: 0 0 0 6px; }
.account > .wide { margin-left: 8px; }
.account > .gaps { margin: 0 0 0 4px; }
.vline { width: 1px; height: 20px; background: #4a505b; margin: 0 2px; }
.window { display: flex; gap: 44px; margin-left: 100px; }

.tabs { display: flex; align-items: center; gap: 1px; height: 29px; padding: 4px 4px 0; color: #bfc4cb; flex: none; }
.tabs a { padding: 3px 12px 2px; }
.tabs .on { background: #3b4453; color: #eef0f2; padding: 3px 11px 2px; }
.tabs button { margin-left: 24px; }

.ribbon { display: grid; grid-template-columns: 279fr 272fr 185fr 341fr 151fr 278fr 85fr 121fr 113fr 95fr; background: #3b4453; height: 124px; flex: none; color: #eef0f2; }
.panel { position: relative; display: flex; flex-direction: column; border-right: 1px solid #262d39; min-width: 0; padding-top: 4px; white-space: nowrap; }
.panel:last-child { border-right: 0; }
.body { display: flex; height: 99px; }
.panel h2 { display: flex; align-items: center; justify-content: center; gap: 9px; height: 20px; }
.panel .shift { padding-right: 14px; }
.big { flex-direction: column; justify-content: flex-start; padding-top: 4px; flex: none; }
.big > svg:first-child { margin-bottom: 5px; }
.big .c { margin-top: 3px; }
.stack { display: grid; grid-template-rows: repeat(3, 31px); justify-items: start; }
.tool { gap: 9px; height: 31px; }
.draw { display: grid; grid-template-columns: 56px 50px 72px 44px 1fr; }
.draw .stack { padding-left: 8px; }
.modify { display: grid; grid-template-columns: 91px 88px 51px 1fr; padding-left: 8px; }
.modify .stack:nth-child(-n+2) .tool { gap: 7px; }
.annot .big:first-child { width: 60px; }
.annot .big + .big { width: 74px; }
.annot .stack { padding-left: 7px; }
.layers .big { width: 79px; }
.layercol { flex: 1; display: grid; grid-template-rows: 31px 31px 31px; align-items: center; margin-right: 3px; }
.combo { width: 100%; height: 27px; background: #495365; border: 1px solid #2e3643; padding: 0 1px 0 7px; gap: 6px; justify-content: flex-start; }
.layers .combo { height: 28px; padding-left: 6px; }
.combo .end { margin-left: auto; }
.swatch { width: 18px; height: 18px; background: #fff; }
.swatch.wide { width: 20px; height: 20px; margin-right: -2px; }
.rule { width: 80px; height: 1px; background: #fff; margin-right: -4px; }
.row { display: flex; gap: 10px; padding-left: 3px; }
.block .big:first-child { width: 54px; }
.block .big + .big { width: 44px; }
.block .stack { padding-left: 9px; }
.props .big { width: 80px; }
.propcol { flex: 1; display: grid; grid-template: repeat(3, 31px) / 24px 1fr; align-items: center; margin-right: 3px; }
.launch { position: absolute; right: 6px; bottom: 8px; }
.groups .big { width: 50px; }
.groups .tool { width: 29px; height: 27px; align-self: center; }
.lit { background: #3f5873; border: 1px solid #7cc4f2; }
.utils .big { width: 88px; }
.utils .stack { padding-left: 2px; }
.clip .big { width: 66px; }
.clip .stack { padding-left: 3px; }
.clip .tool { gap: 7px; }
.viewp .big { width: 76px; }
.panel .viewtitle { justify-content: flex-start; padding-left: 6px; }

.files { display: flex; align-items: center; height: 38px; padding: 3px 20px 0; border-bottom: 5px solid #3b424e; flex: none; }
.slash { width: 1px; height: 20px; background: #565c67; transform: rotate(24deg); margin: 0 12px; }
.files .slash { margin-left: 17px; margin-right: 14px; }
.files > .cur { display: flex; align-items: center; gap: 12px; height: 31px; padding: 0 13px 0 20px; margin-left: 9px; background: #3b4453; clip-path: polygon(9% 0, 100% 0, 91% 100%, 0 100%); color: #fff; width: 132px; }
.add { margin-left: 12px; }

.viewport { position: relative; flex: 1; background: #222831; overflow: hidden; border-bottom: 5px solid #3b424e; }
.canvas { position: absolute; width: 100%; height: 100%; }
.vplabel { position: absolute; left: 4px; top: 6px; display: flex; gap: 2px; }
.vpwin { position: absolute; right: 12px; top: 11px; display: flex; gap: 12px; }
.side { position: absolute; right: 4px; top: 49px; display: flex; flex-direction: column; align-items: flex-end; }
.cube { margin-right: 12px; }
.dirs { font: bold 23px "Liberation Sans", sans-serif; fill: #b4b7ba; }
.top { font: bold 15px "Open Sans", sans-serif; fill: #4a4e54; }
.ucs { width: 82px; height: 20px; border: 1px solid #d0d2d8; border-radius: 5px; background: #a3a6b0; color: #60646e; font: bold 12px/18px "Open Sans", sans-serif; margin: 28px 49px 31px 0; justify-content: space-between; padding: 0 5px 0 4px; }
.navbar { background: #5a5f67; border-radius: 4px; }
.dyn { position: absolute; border: 1px solid #0a0a0a; background: #999; color: #1a1d22; font-size: 15px; line-height: 23px; height: 26px; white-space: nowrap; }
.dist { left: 831px; top: 529px; width: 68px; background: #fff; padding: 2px 5px; }
.dist input { display: block; width: 52px; height: 20px; border: 0; padding: 0; background: #0f7ad6; color: #fff; font: 14px/20px "Open Sans", sans-serif; }
.angle { left: 928px; top: 582px; width: 39px; padding-left: 5px; }
.tip { left: 956px; top: 585px; width: 78px; padding-left: 5px; }

.command { position: absolute; left: 392px; right: 392px; bottom: 0; font: 15px/18px "DejaVu Sans Mono", monospace; }
.history { padding-left: 78px; margin-bottom: 4px; }
.history span { display: inline-block; background: #50555a; color: #d0d3d6; padding: 0 2px; }
.cmdrow { display: flex; height: 32px; }
.cmdtools { display: flex; align-items: center; gap: 9px; width: 71px; padding-left: 3px; background: #2a303a; flex: none; }
.cmdtools button + button { margin-left: 6px; }
.cmdline { flex: 1; display: flex; align-items: center; background: #fff; color: #1c1c1c; padding: 0 5px; border-radius: 2px; }
.cmdline b { margin: 0 6px 0 8px; }
.cmdline svg + svg { margin-left: 2px; }
.cmdline button { display: inline-block; background: #cfcfcf; border-radius: 4px; padding: 1px 1px; }
.cmdline em { font-style: normal; color: #1010e0; }
.cmdline .up { margin-left: auto; }

.status { display: flex; justify-content: space-between; height: 36px; flex: none; }
.layouts { display: flex; align-items: center; padding: 0 20px 5px; }
.layouts .cur { width: 86px; height: 31px; line-height: 31px; text-align: center; background: #3b4453; clip-path: polygon(12% 0, 100% 0, 88% 100%, 0 100%); margin: 0 8px 0 12px; color: #fff; }
.layouts .slash { margin: 0 13px 0 16px; }
.layouts .add { margin: 0; }
.toggles { display: flex; align-items: center; gap: 3px; padding-right: 3px; }
.toggles button { height: 29px; background: #3b4453; }
.toggles .blue { background: #5f8fc4; }
.toggles .sp { gap: 12px; }
.w18 { width: 18px; } .w26 { width: 26px; } .w28 { width: 28px; } .w32 { width: 31px; }
.w40 { width: 40px; gap: 5px; } .w48 { width: 48px; } .w50 { width: 50px; } .w58 { width: 58px; font-size: 15px; }
.bar { width: 1px; height: 29px; background: #3b4453; }
```
